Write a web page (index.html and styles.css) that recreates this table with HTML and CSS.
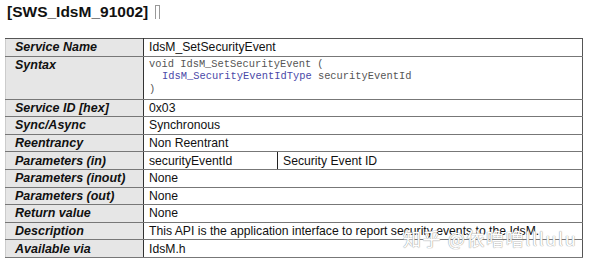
FILE: index.html
```html
<!DOCTYPE html>
<html lang="en">

<head>
    <meta charset="UTF-8">
    <meta name="viewport" content="width=device-width, initial-scale=1.0">
    <title>SWS_IdsM_91002</title>
    <link rel="stylesheet" href="styles.css">
</head>

<body>
    <h1 class="req-id">[SWS_IdsM_91002] <span class="req-mark"></span></h1>

    <!-- API specification table -->
    <table class="api-table">
        <colgroup>
            <col class="col-label">
            <col class="col-param">
            <col>
        </colgroup>
        <tr>
            <th>Service Name</th>
            <td colspan="2">IdsM_SetSecurityEvent</td>
        </tr>
        <tr class="syntax-row">
            <th>Syntax</th>
            <td colspan="2">
                <div class="code">void IdsM_SetSecurityEvent (</div>
                <div class="code indent"><span class="type">IdsM_SecurityEventIdType</span> securityEventId</div>
                <div class="code">)</div>
            </td>
        </tr>
        <tr>
            <th>Service ID [hex]</th>
            <td colspan="2">0x03</td>
        </tr>
        <tr>
            <th>Sync/Async</th>
            <td colspan="2">Synchronous</td>
        </tr>
        <tr>
            <th>Reentrancy</th>
            <td colspan="2">Non Reentrant</td>
        </tr>
        <tr>
            <th>Parameters (in)</th>
            <td class="param-name">securityEventId</td>
            <td>Security Event ID</td>
        </tr>
        <tr>
            <th>Parameters (inout)</th>
            <td colspan="2">None</td>
        </tr>
        <tr>
            <th>Parameters (out)</th>
            <td colspan="2">None</td>
        </tr>
        <tr>
            <th>Return value</th>
            <td colspan="2">None</td>
        </tr>
        <tr>
            <th>Description</th>
            <td colspan="2">This API is the application interface to report security events to the IdsM.</td>
        </tr>
        <tr>
            <th>Available via</th>
            <td colspan="2">IdsM.h</td>
        </tr>
    </table>

    <div class="watermark">知乎 @依噜噜lllulu</div>
</body>

</html>
```

FILE: styles.css
```css
body {
    margin: 0;
    font-family: "Liberation Sans", Arial, sans-serif;
    background-color: #fff;
    color: #111;
    position: relative;
}

.req-id {
    margin: 0;
    padding: 2px 0 0 7px;
    height: 36px;
    font-size: 15.5px;
    line-height: 20px;
    font-weight: bold;
    color: #111;
}

.req-mark {
    display: inline-block;
    width: 3px;
    height: 13px;
    margin-left: 2px;
    vertical-align: -2px;
    border: 1px solid #999;
    border-bottom: none;
}

.api-table {
    margin-left: 5px;
    width: 578px;
    border-collapse: collapse;
    font-size: 12.2px;
    table-layout: fixed;
}

.col-label {
    width: 138px;
}

.col-param {
    width: 134px;
}

.api-table th,
.api-table td {
    height: 16.6px;
    padding: 0 5px;
    border-top: 1px solid #777;
    border-bottom: 1px solid #777;
    text-align: left;
    vertical-align: middle;
    white-space: nowrap;
    overflow: visible;
}

.api-table th {
    padding-left: 9px;
    background-color: #e6e6e6;
    font-size: 12.5px;
    font-style: italic;
    font-weight: bold;
    border-left: 1px solid #ccc;
    border-right: 1px solid #333;
}

.api-table td {
    border-right: 1px solid #555;
}

.api-table tr:first-child th,
.api-table tr:first-child td {
    border-top: 1px solid #555;
}

.api-table .param-name {
    border-right: 1px solid #222;
}

.syntax-row th,
.syntax-row td {
    height: 41px;
    padding-top: 1px;
    vertical-align: top;
}

.code {
    font-family: "Liberation Mono", "Courier New", monospace;
    font-size: 10.4px;
    line-height: 12.5px;
    color: #555;
}

.code.indent {
    padding-left: 13px;
}

.code .type {
    color: #4a48a8;
}

/* Site watermark lying over the table */
.watermark {
    position: absolute;
    left: 403px;
    top: 227px;
    font-family: "Noto Sans CJK SC", sans-serif;
    font-size: 18px;
    line-height: 22px;
    letter-spacing: 1.6px;
    color: #fff;
    text-shadow: 0 0 1px #999, 0 0 1px #999;
}
```
